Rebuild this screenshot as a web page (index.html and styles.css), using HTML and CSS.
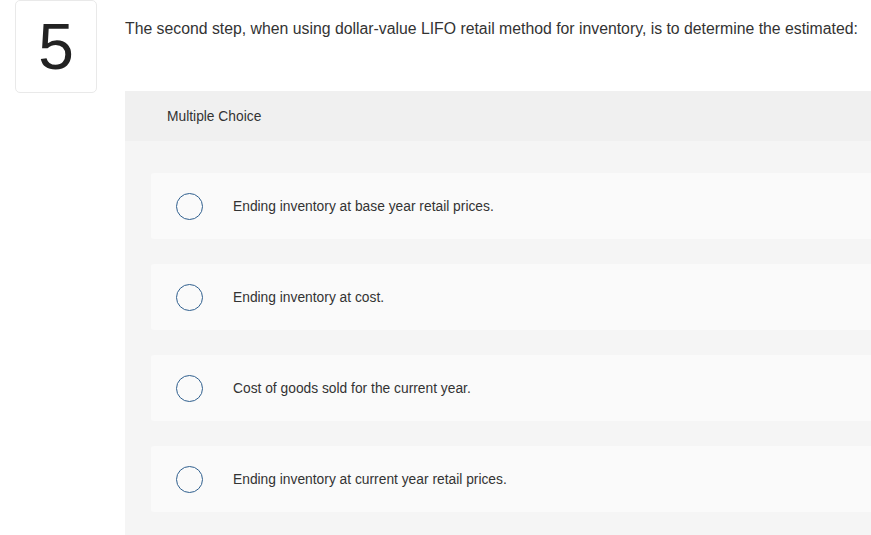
FILE: index.html
```html
<!DOCTYPE html>
<html>
<head>
<meta charset="utf-8">
<link rel="stylesheet" href="styles.css">
</head>
<body>
<div class="page">
  <div class="num-col">
    <div class="num">5</div>
  </div>
  <div class="main">
    <p class="question">The second step, when using dollar-value LIFO retail method for inventory, is to determine the estimated:</p>
    <div class="panel">
      <div class="panel-head">Multiple Choice</div>
      <div class="options">
        <div class="option"><span class="radio"></span><span class="label">Ending inventory at base year retail prices.</span></div>
        <div class="option"><span class="radio"></span><span class="label">Ending inventory at cost.</span></div>
        <div class="option"><span class="radio"></span><span class="label">Cost of goods sold for the current year.</span></div>
        <div class="option"><span class="radio"></span><span class="label">Ending inventory at current year retail prices.</span></div>
      </div>
    </div>
  </div>
</div>
</body>
</html>
```
FILE: styles.css
```css
html, body {
  margin: 0;
  padding: 0;
  background: #ffffff;
  overflow: hidden;
}
body {
  font-family: "Liberation Sans", Arial, sans-serif;
  color: #333333;
}
.page {
  display: flex;
  align-items: flex-start;
}
.num-col {
  width: 125px;
  flex: none;
}
.num {
  margin-left: 15px;
  width: 80px;
  height: 91px;
  border: 1px solid #e9e9e9;
  border-radius: 5px;
  display: flex;
  align-items: center;
  justify-content: center;
  font-size: 64px;
  line-height: 1;
  color: #222222;
  font-weight: 400;
}
.main {
  flex: 1;
  min-width: 0;
}
.question {
  margin: 19px 0 0 0;
  font-size: 15.8px;
  line-height: 20px;
  color: #333333;
  white-space: nowrap;
}
.panel {
  margin-top: 52px;
  background: #f5f5f5;
}
.panel-head {
  height: 50px;
  background: #f0f0f0;
  display: flex;
  align-items: center;
  padding-left: 42px;
  font-size: 13.8px;
  color: #333333;
}
.options {
  display: flex;
  flex-direction: column;
  gap: 25px;
  padding: 32px 0 30px 26px;
}
.option {
  height: 66px;
  background: #fafafa;
  border-radius: 3px 0 0 3px;
  display: flex;
  align-items: center;
}
.radio {
  width: 25px;
  height: 25px;
  margin-left: 25px;
  border: 1.5px solid #2f5f8e;
  border-radius: 50%;
  flex: none;
}
.label {
  margin-left: 30px;
  font-size: 13.8px;
  color: #333333;
}
```
